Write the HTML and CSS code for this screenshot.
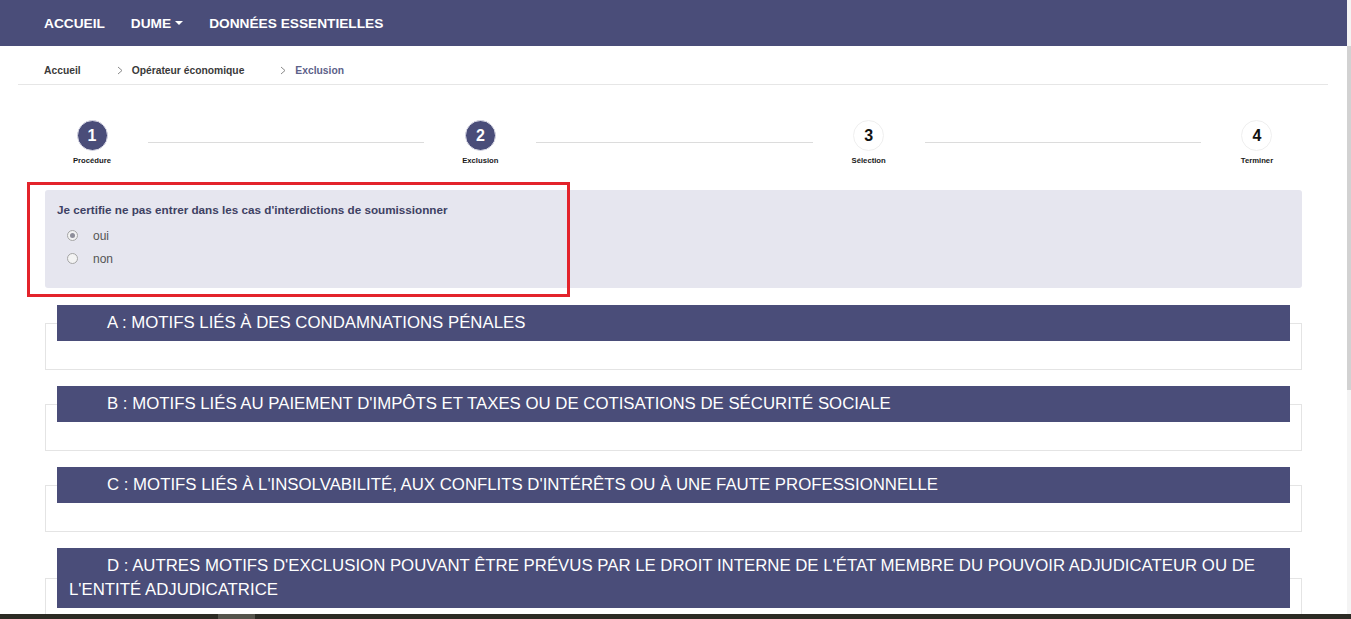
FILE: index.html
```html
<!DOCTYPE html>
<html lang="fr">
<head>
<meta charset="utf-8">
<title>DUME - Exclusion</title>
<link rel="stylesheet" href="styles.css">
</head>
<body>
<nav class="navbar">
  <a class="nav-link">ACCUEIL</a>
  <a class="nav-link">DUME <span class="caret"></span></a>
  <a class="nav-link">DONNÉES ESSENTIELLES</a>
</nav>

<div class="page">
  <div class="breadcrumb">
    <span class="crumb">Accueil</span>
    <span class="crumb"><svg class="chev" width="6" height="9" viewBox="0 0 6 9"><polyline points="1,1 5,4.5 1,8" fill="none" stroke="#8a8a8a" stroke-width="1"/></svg>Opérateur économique</span>
    <span class="crumb active"><svg class="chev" width="6" height="9" viewBox="0 0 6 9"><polyline points="1,1 5,4.5 1,8" fill="none" stroke="#8a8a8a" stroke-width="1"/></svg>Exclusion</span>
  </div>

  <div class="content">
    <div class="stepper">
      <div class="step done"><div class="step-circle">1</div><div class="step-label">Procédure</div></div>
      <div class="step-line"></div>
      <div class="step done"><div class="step-circle">2</div><div class="step-label">Exclusion</div></div>
      <div class="step-line"></div>
      <div class="step"><div class="step-circle">3</div><div class="step-label">Sélection</div></div>
      <div class="step-line"></div>
      <div class="step"><div class="step-circle">4</div><div class="step-label">Terminer</div></div>
    </div>

    <div class="certif">
      <div class="certif-title">Je certifie ne pas entrer dans les cas d'interdictions de soumissionner</div>
      <div class="radio-row"><span class="radio checked"></span><span class="radio-label">oui</span></div>
      <div class="radio-row"><span class="radio"></span><span class="radio-label">non</span></div>
    </div>

    <fieldset class="section"><legend>A : MOTIFS LIÉS À DES CONDAMNATIONS PÉNALES</legend></fieldset>
    <fieldset class="section"><legend>B : MOTIFS LIÉS AU PAIEMENT D'IMPÔTS ET TAXES OU DE COTISATIONS DE SÉCURITÉ SOCIALE</legend></fieldset>
    <fieldset class="section"><legend>C : MOTIFS LIÉS À L'INSOLVABILITÉ, AUX CONFLITS D'INTÉRÊTS OU À UNE FAUTE PROFESSIONNELLE</legend></fieldset>
    <fieldset class="section"><legend>D : AUTRES MOTIFS D'EXCLUSION POUVANT ÊTRE PRÉVUS PAR LE DROIT INTERNE DE L'ÉTAT MEMBRE DU POUVOIR ADJUDICATEUR OU DE L'ENTITÉ ADJUDICATRICE</legend></fieldset>
  </div>
</div>

<div class="highlight"></div>
<div class="scrollbar"><div class="scroll-thumb"></div></div>
<div class="taskbar"><div class="taskbar-item"></div></div>
</body>
</html>
```

FILE: styles.css
```css
html, body {
  margin: 0;
  padding: 0;
  overflow: hidden;
  height: 619px;
  background: #ffffff;
  font-family: "Liberation Sans", Arial, sans-serif;
}

body {
  width: 1347px;
  position: relative;
}

.navbar {
  height: 46px;
  background: #4a4d79;
  display: flex;
  align-items: center;
  gap: 26px;
  padding-left: 44px;
  box-sizing: border-box;
}

.nav-link {
  color: #ffffff;
  font-weight: bold;
  font-size: 13.7px;
  display: flex;
  align-items: center;
  gap: 4px;
}

.caret {
  display: inline-block;
  width: 0;
  height: 0;
  border-top: 4px solid #ffffff;
  border-left: 4px solid transparent;
  border-right: 4px solid transparent;
}

.page {
  padding: 0 19px 0 18px;
}

.breadcrumb {
  display: flex;
  align-items: center;
  height: 28px;
  padding: 10px 0 0 26px;
  border-bottom: 1px solid #e6e6e6;
  font-size: 10.3px;
  font-weight: bold;
  color: #3a3a3a;
}

.crumb {
  display: flex;
  align-items: center;
  margin-right: 36px;
}

.crumb.active {
  color: #5c6189;
}

.chev {
  margin-right: 9px;
}

.content {
  padding: 0 26px 0 27px;
}

.stepper {
  display: flex;
  margin: 35px -11px 0 -9px;
}

.step {
  width: 112px;
  display: flex;
  flex-direction: column;
  align-items: center;
}

.step-circle {
  width: 31px;
  height: 31px;
  border-radius: 50%;
  box-sizing: border-box;
  border: 1px solid #efefef;
  background: #ffffff;
  color: #111111;
  font-weight: bold;
  font-size: 16px;
  display: flex;
  align-items: center;
  justify-content: center;
}

.step.done .step-circle {
  background: #4a4d79;
  border-color: #d9d9e6;
  color: #ffffff;
}

.step-label {
  margin-top: 5px;
  font-size: 7.7px;
  line-height: 10px;
  font-weight: bold;
  color: #1a1a1a;
}

.step-line {
  flex: 1;
  height: 1px;
  background: #dcdcdc;
  margin-top: 22px;
}

.certif {
  margin-top: 24px;
  background: #e6e6ef;
  border-radius: 3px;
  padding: 12px 12px 18px;
}

.certif-title {
  font-size: 11.7px;
  line-height: 16px;
  font-weight: bold;
  color: #3e4163;
  margin-bottom: 6px;
}

.radio-row {
  display: flex;
  align-items: center;
  height: 23px;
  padding-left: 10px;
}

.radio {
  width: 11px;
  height: 11px;
  box-sizing: border-box;
  border-radius: 50%;
  border: 1px solid #a5a5a5;
  background: #f3f3f3;
  display: flex;
  align-items: center;
  justify-content: center;
  margin-right: 15px;
}

.radio.checked::after {
  content: "";
  width: 5px;
  height: 5px;
  border-radius: 50%;
  background: #8e8e9a;
}

.radio-label {
  font-size: 12px;
  color: #555555;
}

.section {
  margin: 17px 0 0;
  padding: 0 11px 28px;
  border: 1px solid #e4e4e4;
  min-width: 0;
}

.section + .section {
  margin-top: 16px;
}

.section legend {
  width: 100%;
  box-sizing: border-box;
  background: #4a4d79;
  color: #ffffff;
  font-size: 16.8px;
  line-height: 24px;
  padding: 6px 12px;
  text-indent: 38px;
  margin: 0;
}

.highlight {
  position: absolute;
  left: 27px;
  top: 182px;
  width: 543px;
  height: 115px;
  box-sizing: border-box;
  border: 3px solid #e3232b;
  pointer-events: none;
}

.scrollbar {
  position: fixed;
  top: 0;
  right: 0;
  width: 4px;
  height: 619px;
  background: #f4f4f4;
}

.scroll-thumb {
  margin-top: 46px;
  height: 344px;
  background: #d2d2d2;
}

.taskbar {
  position: fixed;
  left: 0;
  bottom: 0;
  width: 1351px;
  height: 5px;
  background: #2c2b24;
}

.taskbar-item {
  margin-left: 218px;
  width: 37px;
  height: 5px;
  background: #55544c;
}
```
